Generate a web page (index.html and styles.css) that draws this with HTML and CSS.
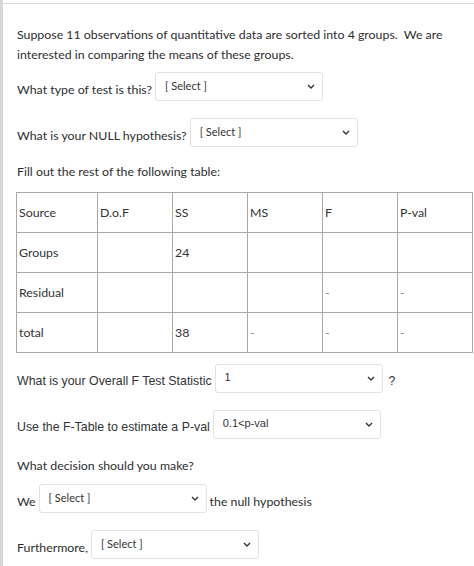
FILE: index.html
```html
<!DOCTYPE html>
<html>
<head>
<meta charset="utf-8">
<link rel="stylesheet" href="styles.css">
</head>
<body>
<div class="frame">
  <div class="topline"></div>
  <div class="content">
    <p class="intro">Suppose 11 observations of quantitative data are sorted into 4 groups.&nbsp; We are interested in comparing the means of these groups.</p>

    <div class="row r-type">
      <span class="label">What type of test is this?</span>
      <span class="select"><span class="val">[ Select ]</span><svg class="chev" viewBox="0 0 8 5" width="8" height="5"><path d="M1 1 L4 4 L7 1" fill="none" stroke="#333" stroke-width="1.4"/></svg></span>
    </div>

    <div class="row r-null">
      <span class="label">What is your NULL hypothesis?</span>
      <span class="select"><span class="val">[ Select ]</span><svg class="chev" viewBox="0 0 8 5" width="8" height="5"><path d="M1 1 L4 4 L7 1" fill="none" stroke="#333" stroke-width="1.4"/></svg></span>
    </div>

    <p class="fill">Fill out the rest of the following table:</p>

    <table class="anova">
      <colgroup>
        <col class="c1"><col class="c2"><col class="c2"><col class="c2"><col class="c2"><col class="c6">
      </colgroup>
      <tr><td>Source</td><td>D.o.F</td><td>SS</td><td>MS</td><td>F</td><td>P-val</td></tr>
      <tr><td>Groups</td><td></td><td>24</td><td></td><td></td><td></td></tr>
      <tr><td>Residual</td><td></td><td></td><td></td><td class="dash">-</td><td class="dash">-</td></tr>
      <tr><td>total</td><td></td><td>38</td><td class="dash">-</td><td class="dash">-</td><td class="dash">-</td></tr>
    </table>

    <div class="row r-fstat arial">
      <span class="label">What is your Overall F Test Statistic</span>
      <span class="select"><span class="val v-arial">1</span><svg class="chev" viewBox="0 0 8 5" width="8" height="5"><path d="M1 1 L4 4 L7 1" fill="none" stroke="#333" stroke-width="1.4"/></svg></span>
      <span class="label q">?</span>
    </div>

    <div class="row r-pval arial">
      <span class="label">Use the F-Table to estimate a P-val</span>
      <span class="select"><span class="val v-arial">0.1&lt;p-val</span><svg class="chev" viewBox="0 0 8 5" width="8" height="5"><path d="M1 1 L4 4 L7 1" fill="none" stroke="#333" stroke-width="1.4"/></svg></span>
    </div>

    <p class="decision">What decision should you make?</p>

    <div class="row r-we">
      <span class="label">We</span>
      <span class="select"><span class="val">[ Select ]</span><svg class="chev" viewBox="0 0 8 5" width="8" height="5"><path d="M1 1 L4 4 L7 1" fill="none" stroke="#333" stroke-width="1.4"/></svg></span>
      <span class="label">the null hypothesis</span>
    </div>

    <div class="row r-further">
      <span class="label">Furthermore,</span>
      <span class="select"><span class="val">[ Select ]</span><svg class="chev" viewBox="0 0 8 5" width="8" height="5"><path d="M1 1 L4 4 L7 1" fill="none" stroke="#333" stroke-width="1.4"/></svg></span>
    </div>
  </div>
</div>
</body>
</html>
```
FILE: styles.css
```css
html, body {
  margin: 0;
  padding: 0;
  background: #ffffff;
}
body {
  font-family: Lato, "Open Sans", sans-serif;
  font-size: 12.35px;
  color: #2e2e2e;
}
.frame {
  width: 474px;
  height: 566px;
  border-left: 3px solid #d6d6d6;
  box-sizing: border-box;
  overflow: hidden;
}
.topline {
  margin-top: 3px;
  height: 1px;
  background: #dcdcdc;
}
.content {
  padding: 21px 0 0 14px;
}
p {
  margin: 0;
}
.intro {
  line-height: 19.5px;
  width: 440px;
}
.row {
  display: flex;
  align-items: center;
  gap: 3px;
  height: 29px;
}
.label {
  padding-top: 5px;
}
.select {
  box-sizing: border-box;
  width: 168px;
  height: 29px;
  border: 1px solid #e2e2e2;
  border-radius: 3px;
  display: flex;
  align-items: center;
  justify-content: space-between;
  padding: 0 7px 0 9px;
  background: #fff;
}
.val {
  font-size: 11px;
  color: #333;
  margin-top: -3px;
}
.v-arial {
  font-family: "Liberation Sans", Arial, sans-serif;
}
.chev {
  display: block;
}
.arial .label {
  font-family: "Liberation Sans", Arial, sans-serif;
  color: #333;
}
.r-type { margin-top: 8px; }
.r-null { margin-top: 17px; }
.fill { margin-top: 15px; line-height: 20px; }
.anova {
  margin-top: 10px;
  border-collapse: collapse;
  width: 456px;
  margin-left: -1px;
  table-layout: fixed;
  font-size: 12.35px;
  color: #333;
}
.c1 { width: 81px; }
.c2 { width: 75px; }
.c6 { width: 75px; }
.anova td {
  border: 1px solid #a8a8a8;
  height: 40px;
  padding: 0 2px;
  vertical-align: middle;
  box-sizing: border-box;
}
.dash { color: #888; }
.r-fstat { margin-top: 11px; }
.r-fstat .q { margin-left: 3px; }
.r-pval { margin-top: 17px; }
.decision { margin-top: 17px; line-height: 20px; }
.r-we { margin-top: 8px; }
.r-further { margin-top: 17px; }
```
